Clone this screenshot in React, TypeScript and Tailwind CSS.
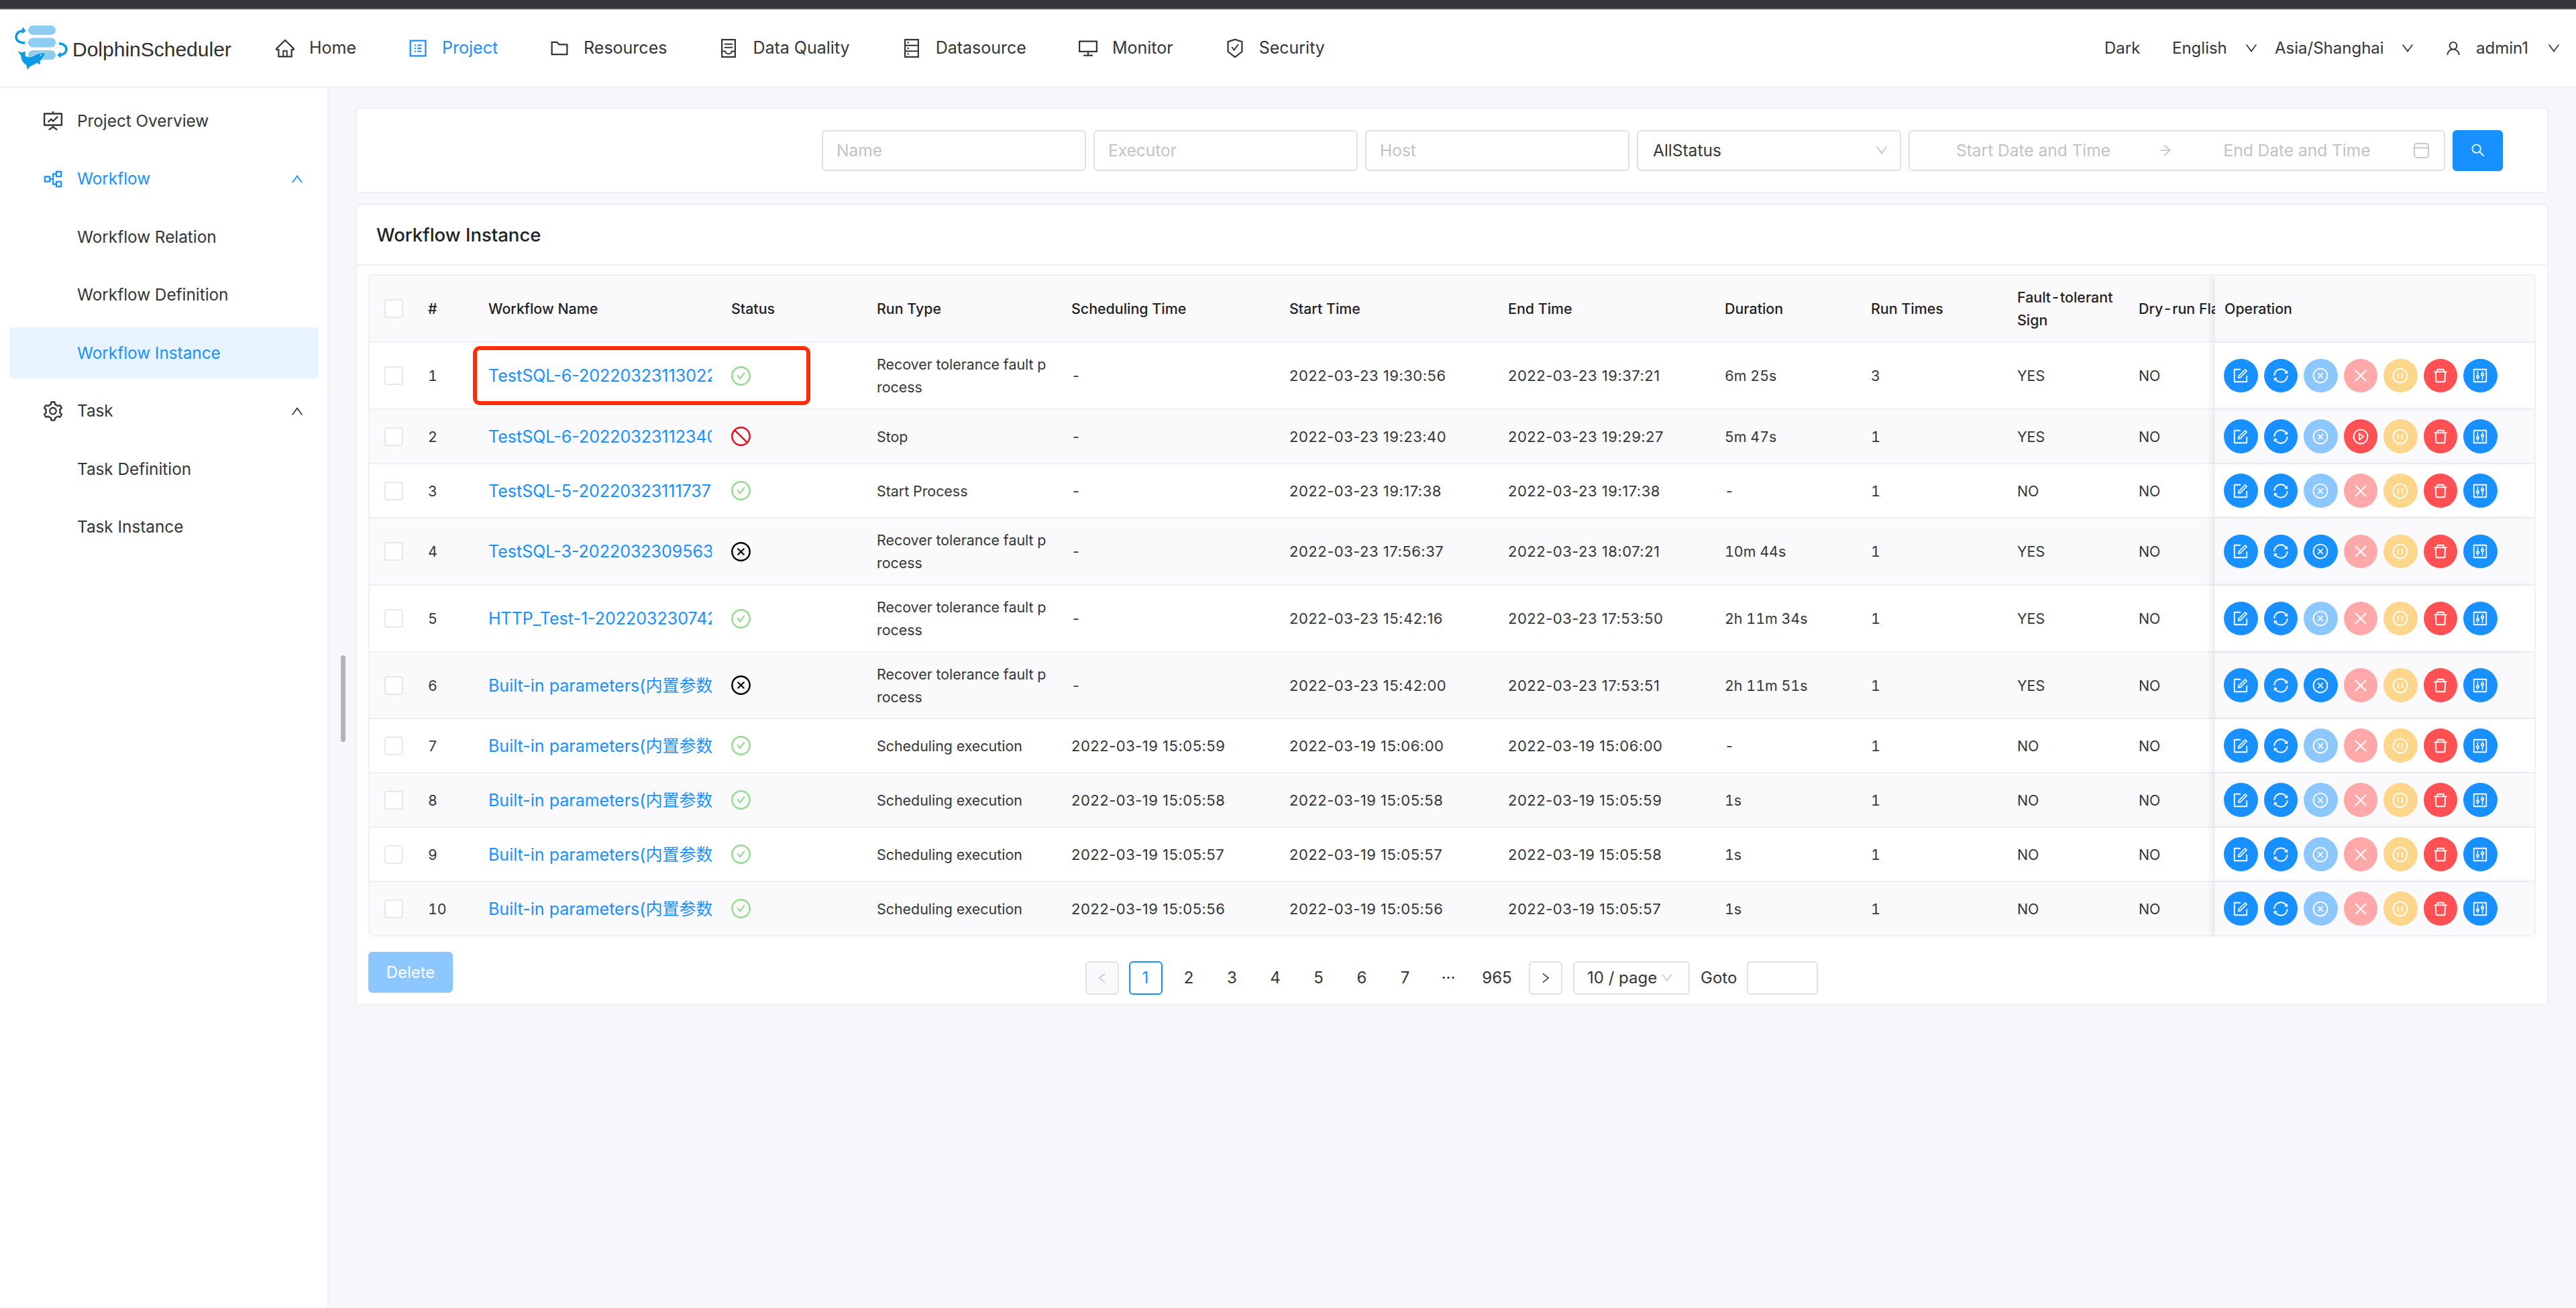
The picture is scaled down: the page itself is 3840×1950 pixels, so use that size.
import React from "react";
import {
  AiOutlineHome, AiOutlineProfile, AiOutlineFolder, AiOutlineContainer, AiOutlineDatabase, AiOutlineDesktop,
  AiOutlineSafetyCertificate, AiOutlineDown, AiOutlineUp, AiOutlineUser, AiOutlineFundProjectionScreen,
  AiOutlinePartition, AiOutlineSetting, AiOutlineSearch, AiOutlineArrowRight, AiOutlineCheckCircle,
  AiOutlineStop, AiOutlineCloseCircle, AiOutlineForm, AiOutlineSync, AiOutlineClose, AiOutlinePauseCircle,
  AiOutlinePlayCircle, AiOutlineDelete, AiOutlineControl, AiOutlineLeft, AiOutlineRight,
} from "react-icons/ai";

const Logo = () => (
  <svg width="80" height="68" viewBox="22 39 80 68" className="shrink-0">
    <rect x="42" y="39" width="41" height="14" rx="7" fill="#8ccdf0" />
    <rect x="42" y="57.5" width="41" height="14" rx="7" fill="#8ccdf0" />
    <rect x="42" y="76" width="41" height="14" rx="7" fill="#8ccdf0" />
    <path d="M35 47 C26 47 24 53 24 56 C24 61 28 65 37 65" fill="none" stroke="#0d9ae4" strokeWidth="3.6" />
    <path d="M34 42 L38 47 L33 51 Z" fill="#0d9ae4" stroke="#0d9ae4" strokeWidth="1" />
    <path d="M88 66 C96 66 99 71 99 74 C99 80 94 83 88 83" fill="none" stroke="#0d9ae4" strokeWidth="3.6" />
    <path d="M90 79 L86 83 L90 87 Z" fill="#0d9ae4" stroke="#0d9ae4" strokeWidth="1" />
    <path d="M26 77 L33 79 L38 77 L38 84 C42 87 47 86 52 83 C57 80 62 79 68 80 C67 84 64 88 60 92 L60 98 L55 95 C51 98 47 99 44 101 L41 106 L39 98 C34 95 31 90 31 84 Z" fill="#0d9ae4" stroke="#fff" strokeWidth="0.6" />
    <circle cx="61" cy="83" r="1" fill="#fff" />
  </svg>
);

const navItems = [
  { label: "Home", Icon: AiOutlineHome },
  { label: "Project", Icon: AiOutlineProfile, active: true },
  { label: "Resources", Icon: AiOutlineFolder },
  { label: "Data Quality", Icon: AiOutlineContainer },
  { label: "Datasource", Icon: AiOutlineDatabase },
  { label: "Monitor", Icon: AiOutlineDesktop },
  { label: "Security", Icon: AiOutlineSafetyCertificate },
];

const Header = () => (
  <header className="flex h-[117px] items-center border-b-2 border-[#efeff5] bg-white text-[#333639]">
    <div className="ml-[22px] flex w-[387px] items-center">
      <Logo />
      <span className="ml-[6px] mt-[4px] font-['Liberation_Sans',sans-serif] text-[30px] text-[#2f2f2f]">DolphinScheduler</span>
    </div>
    <nav className="flex items-center gap-[76px] text-[25px]">
      {navItems.map(({ label, Icon, active }) => (
        <div key={label} className={`flex items-center gap-[20px] ${active ? "text-[#1890ff]" : ""}`}>
          <Icon size={32} />
          <span>{label}</span>
        </div>
      ))}
    </nav>
    <div className="ml-auto mr-[22.5px] flex items-center text-[24px]">
      <span className="w-[101px]">Dark</span>
      <span className="w-[106.5px]">English</span>
      <span className="w-[46.5px]"><AiOutlineDown size={22} /></span>
      <span className="w-[186.5px]">Asia/Shanghai</span>
      <span className="w-[66.5px]"><AiOutlineDown size={22} /></span>
      <span className="w-[47px]"><AiOutlineUser size={26} /></span>
      <span className="w-[104.5px]">admin1</span>
      <AiOutlineDown size={22} />
    </div>
  </header>
);

const SideItem = ({ label, Icon, active, open, selected }: { label: string; Icon?: any; active?: boolean; open?: boolean; selected?: boolean }) => (
  <div
    className={`relative mx-[14px] mb-[10.5px] flex h-[76px] w-[461px] items-center rounded-[6px] pl-[101px] ${selected ? "bg-[#e7f4ff] text-[#1890ff]" : ""} ${active ? "text-[#1890ff]" : ""}`}
  >
    {Icon && <Icon size={34} className="absolute left-[48px]" />}
    <span>{label}</span>
    {open && <AiOutlineUp size={22} className="absolute left-[418px]" />}
  </div>
);

const Sidebar = () => (
  <aside className="w-[490px] shrink-0 border-r-2 border-[#efeff5] bg-white pt-[11px] text-[24.3px] text-[#333639]">
    <SideItem label="Project Overview" Icon={AiOutlineFundProjectionScreen} />
    <SideItem label="Workflow" Icon={AiOutlinePartition} active open />
    <SideItem label="Workflow Relation" />
    <SideItem label="Workflow Definition" />
    <SideItem label="Workflow Instance" selected />
    <SideItem label="Task" Icon={AiOutlineSetting} open />
    <SideItem label="Task Definition" />
    <SideItem label="Task Instance" />
  </aside>
);

const TextInput = ({ ph }: { ph: string }) => (
  <div className="flex h-[61px] w-[394px] items-center rounded-[6px] border-2 border-[#e0e0e6] bg-white pl-[20px] text-[24.5px] text-[#c2c2c2]">{ph}</div>
);

const Filter = () => (
  <section className="flex h-[128px] items-center justify-end gap-[11px] rounded-[6px] border-2 border-[#efeff5] bg-white pr-[66px]">
    <TextInput ph="Name" />
    <TextInput ph="Executor" />
    <TextInput ph="Host" />
    <div className="flex h-[61px] w-[394px] items-center justify-between rounded-[6px] border-2 border-[#e0e0e6] bg-white pl-[22px] pr-[16px] text-[24.5px] text-[#333639]">
      <span>AllStatus</span>
      <AiOutlineDown size={22} className="text-[#c2c2c2]" />
    </div>
    <div className="flex h-[61px] w-[800px] items-center rounded-[6px] border-2 border-[#e0e0e6] bg-white text-[24.5px] text-[#c2c2c2]">
      <span className="w-[368px] text-center">Start Date and Time</span>
      <AiOutlineArrowRight size={22} className="ml-[2px]" />
      <span className="w-[358px] pl-[12px] text-center">End Date and Time</span>
      <svg width="23" height="23" viewBox="0 0 23 23" fill="none" stroke="#c8c8c8" strokeWidth="2" className="ml-[1px]">
        <rect x="1" y="1" width="21" height="21" rx="4" />
        <path d="M1 7.5 H22" />
      </svg>
    </div>
    <button className="flex h-[61px] w-[75px] items-center justify-center rounded-[6px] bg-[#1890ff] text-white">
      <AiOutlineSearch size={24} />
    </button>
  </section>
);

type Row = {
  h: string; name: React.ReactNode; status: "ok" | "stop" | "fail"; type: string; sched: string; start: string; end: string;
  dur: string; times: string; fault: string; stopOn?: boolean; play?: boolean;
};
const BI = "Built-in parameters(内置参数)-0-20220319";
const RC = "Recover tolerance fault process";
const SE = "Scheduling execution";
const rows: Row[] = [
  { h: "h-[100px]", name: "TestSQL-6-20220323113022", status: "ok", type: RC, sched: "-", start: "2022-03-23 19:30:56", end: "2022-03-23 19:37:21", dur: "6m 25s", times: "3", fault: "YES" },
  { h: "h-[81px]", name: "TestSQL-6-20220323112340", status: "stop", type: "Stop", sched: "-", start: "2022-03-23 19:23:40", end: "2022-03-23 19:29:27", dur: "5m 47s", times: "1", fault: "YES", play: true },
  { h: "h-[81px]", name: "TestSQL-5-20220323111737", status: "ok", type: "Start Process", sched: "-", start: "2022-03-23 19:17:38", end: "2022-03-23 19:17:38", dur: "-", times: "1", fault: "NO" },
  { h: "h-[100px]", name: "TestSQL-3-20220323095637", status: "fail", type: RC, sched: "-", start: "2022-03-23 17:56:37", end: "2022-03-23 18:07:21", dur: "10m 44s", times: "1", fault: "YES", stopOn: true },
  { h: "h-[100px]", name: "HTTP_Test-1-20220323074216", status: "ok", type: RC, sched: "-", start: "2022-03-23 15:42:16", end: "2022-03-23 17:53:50", dur: "2h 11m 34s", times: "1", fault: "YES" },
  { h: "h-[99px]", name: BI, status: "fail", type: RC, sched: "-", start: "2022-03-23 15:42:00", end: "2022-03-23 17:53:51", dur: "2h 11m 51s", times: "1", fault: "YES", stopOn: true },
  { h: "h-[81px]", name: BI, status: "ok", type: SE, sched: "2022-03-19 15:05:59", start: "2022-03-19 15:06:00", end: "2022-03-19 15:06:00", dur: "-", times: "1", fault: "NO" },
  { h: "h-[81px]", name: BI, status: "ok", type: SE, sched: "2022-03-19 15:05:58", start: "2022-03-19 15:05:58", end: "2022-03-19 15:05:59", dur: "1s", times: "1", fault: "NO" },
  { h: "h-[81px]", name: BI, status: "ok", type: SE, sched: "2022-03-19 15:05:57", start: "2022-03-19 15:05:57", end: "2022-03-19 15:05:58", dur: "1s", times: "1", fault: "NO" },
  { h: "h-[81px]", name: BI, status: "ok", type: SE, sched: "2022-03-19 15:05:56", start: "2022-03-19 15:05:56", end: "2022-03-19 15:05:57", dur: "1s", times: "1", fault: "NO" },
];

const Check = () => <div className="h-[28px] w-[28px] rounded-[4px] border-2 border-[#e8e8ec] bg-white" />;

const Circle = ({ bg, children }: { bg: string; children: React.ReactNode }) => (
  <span className={`flex h-[50.5px] w-[50.5px] shrink-0 items-center justify-center rounded-full text-white ${bg}`}>{children}</span>
);

const Ops = ({ row }: { row: Row }) => (
  <div className="flex items-center gap-[9px]">
    <Circle bg="bg-[#1890ff]"><AiOutlineForm size={26} /></Circle>
    <Circle bg="bg-[#1890ff]"><AiOutlineSync size={26} /></Circle>
    <Circle bg={row.stopOn ? "bg-[#1890ff]" : "bg-[#8cc8ff]"}><AiOutlineCloseCircle size={26} /></Circle>
    {row.play ? (
      <Circle bg="bg-[#ff5153]"><AiOutlinePlayCircle size={26} /></Circle>
    ) : (
      <Circle bg="bg-[#ffa8a9]"><AiOutlineClose size={26} /></Circle>
    )}
    <Circle bg="bg-[#fcd68a]"><AiOutlinePauseCircle size={26} /></Circle>
    <Circle bg="bg-[#ff5153]"><AiOutlineDelete size={26} /></Circle>
    <Circle bg="bg-[#1890ff]"><AiOutlineControl size={26} /></Circle>
  </div>
);

const StatusIcon = ({ s }: { s: Row["status"] }) =>
  s === "ok" ? (
    <AiOutlineCheckCircle size={33} className="-ml-[2px] text-[#93dc8f]" />
  ) : s === "stop" ? (
    <AiOutlineStop size={33} className="-ml-[2px] text-[#e0101a]" />
  ) : (
    <AiOutlineCloseCircle size={33} className="-ml-[2px] text-black" />
  );

const widths = [
  "w-[73px]", "w-[90px]", "w-[362px]", "w-[217px]", "w-[290px]", "w-[325px]", "w-[326px]", "w-[323px]", "w-[218px]", "w-[218px]", "w-[181px]", "w-[128px]", "w-auto",
];
const heads = ["#", "Workflow Name", "Status", "Run Type", "Scheduling Time", "Start Time", "End Time", "Duration", "Run Times"];

const td = "pl-[14px] border-b-2 border-[#efeff5]";
const dateTd = "pl-[14px] border-b-2 border-[#efeff5] text-[22px] tracking-[0.5px] normal-nums";
const OpCell = ({ children, bg, pl }: { children: React.ReactNode; bg: string; pl: string }) => (
  <td className={`relative border-b-2 border-[#efeff5] ${bg} ${pl} shadow-[-6px_0_10px_rgba(0,0,0,0.07)]`}>{children}</td>
);

const Table = () => (
  <div className="overflow-hidden rounded-[6px] border-x-2 border-t-2 border-[#efeff5]">
    <table className="w-full table-fixed border-separate border-spacing-0 text-[21.4px] leading-[34px] text-[#333639] tabular-nums">
      <colgroup>
        {widths.map((w, i) => <col key={i} className={w} />)}
      </colgroup>
      <thead>
        <tr className="h-[100px] bg-[#fafafc] text-left text-[#1f2225]">
          <th className="border-b-2 border-[#efeff5] pl-[22px]"><Check /></th>
          {heads.map((h) => <th key={h} className={`${td} font-medium`}>{h}</th>)}
          <th className={`${td} font-medium`}>Fault-tolerant<br />Sign</th>
          <th className={`${td} overflow-hidden whitespace-nowrap font-medium`}>Dry-run Flag</th>
          <OpCell bg="bg-[#fafafc]" pl="pl-[14px]"><span className="font-medium">Operation</span></OpCell>
        </tr>
      </thead>
      <tbody>
        {rows.map((r, i) => {
          const bg = i % 2 === 1 ? "bg-[#fafafc]" : "bg-white";
          return (
            <tr key={i} className={`${r.h} ${bg}`}>
              <td className="border-b-2 border-[#efeff5] pl-[22px]"><Check /></td>
              <td className={td}>{i + 1}</td>
              <td className={`${td} relative`}>
                <div className="w-[333px] overflow-hidden whitespace-nowrap text-[25px] normal-nums text-[#1890ff]">{r.name}</div>
                {i === 0 && <div className="absolute left-[-9px] top-[5px] h-[88px] w-[503px] rounded-[10px] border-[6px] border-[#fb2d0a]" />}
              </td>
              <td className={td}><StatusIcon s={r.status} /></td>
              <td className={`${td} break-all pr-[20px]`}>{r.type}</td>
              <td className={r.sched === "-" ? td : dateTd}>{r.sched}</td>
              <td className={dateTd}>{r.start}</td>
              <td className={dateTd}>{r.end}</td>
              <td className={td}>{r.dur}</td>
              <td className={td}>{r.times}</td>
              <td className={td}>{r.fault}</td>
              <td className={td}>NO</td>
              <OpCell bg={bg} pl="pl-[13px]"><Ops row={r} /></OpCell>
            </tr>
          );
        })}
      </tbody>
    </table>
  </div>
);

const PageBtn = ({ children, cls = "" }: { children: React.ReactNode; cls?: string }) => (
  <span className={`flex h-[50px] min-w-[50px] items-center justify-center rounded-[6px] ${cls}`}>{children}</span>
);

const Footer = () => (
  <div className="flex h-[101px] items-start text-[24px] text-[#333639]">
    <button className="mt-[23px] flex h-[61px] w-[126px] items-center justify-center rounded-[6px] bg-[#8cc8ff] text-white">Delete</button>
    <div className="ml-[943px] mt-[37px] flex items-center gap-[14.5px]">
      <PageBtn cls="border-2 border-[#e0e0e6] bg-[#fafafc] text-[#c2c2c2]"><AiOutlineLeft size={20} /></PageBtn>
      <PageBtn cls="border-2 border-[#1890ff] text-[#1890ff]">1</PageBtn>
      {["2", "3", "4", "5", "6", "7", "···"].map((p) => <PageBtn key={p}>{p}</PageBtn>)}
      <PageBtn cls="w-[66px]">965</PageBtn>
      <PageBtn cls="border-2 border-[#e0e0e6]"><AiOutlineRight size={20} /></PageBtn>
      <div className="ml-[1.5px] flex h-[50px] w-[174px] items-center rounded-[6px] border-2 border-[#e0e0e6] pl-[19px]">
        <span>10 / page</span>
        <AiOutlineDown size={20} className="ml-[5px] text-[#c2c2c2]" />
      </div>
      <span className="ml-[1.5px]">Goto</span>
      <div className="h-[50px] w-[106px] rounded-[6px] border-2 border-[#e0e0e6] bg-white" />
    </div>
  </div>
);

export default function App() {
  return (
    <div className="relative flex h-[1950px] flex-col overflow-hidden bg-[#f7f7fb] font-['Inter','Noto_Sans_CJK_SC',sans-serif]">
      <div className="h-[14px] shrink-0 border-b-2 border-[#55565a] bg-[#36373c]" />
      <Header />
      <div className="flex flex-1">
        <Sidebar />
        <main className="relative flex-1 pl-[40px] pr-[41px] pt-[29px]">
          <span className="absolute left-[18px] top-[846px] h-[129px] w-[7px] rounded-full bg-[#b4b4b8]" />
          <Filter />
          <section className="mt-[16px] rounded-[6px] border-2 border-[#efeff5] bg-white">
            <h2 className="flex h-[90px] items-center border-b-2 border-[#efeff5] pl-[29px] pt-[2px] text-[27.5px] font-medium text-[#1f2225]">Workflow Instance</h2>
            <div className="px-[17px] pt-[13px]">
              <Table />
              <Footer />
            </div>
          </section>
        </main>
      </div>
    </div>
  );
}
